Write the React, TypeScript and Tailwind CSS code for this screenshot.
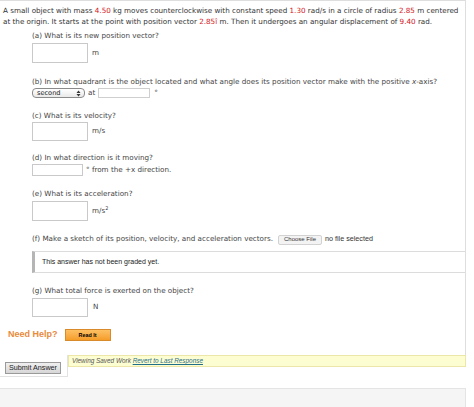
const red = 'text-[#d4161c]';

function Label({ children }: { children: React.ReactNode }) {
  return <p className="whitespace-nowrap text-[7.2px] leading-[11px] text-[#444]">{children}</p>;
}

function Box({ w = 'w-[56px]', h = 'h-[20px]' }: { w?: string; h?: string }) {
  return <div className={`${w} ${h} border border-[#c9c9c9] bg-white`} />;
}

export default function App() {
  return (
    <div className="h-[407px] w-[474px] overflow-hidden bg-white font-['DejaVu_Sans',sans-serif] text-[#333]">
      {/* question panel */}
      <div className="h-[355px] w-[466px] border-r border-t border-[#dedede] pl-[3px] pt-[4px]">
        <p className="text-[7.2px] leading-[11px] text-[#333]">
          <span className="block whitespace-nowrap">
            A small object with mass <span className={red}>4.50</span> kg moves counterclockwise with constant
            speed <span className={red}>1.30</span> rad/s in a circle of radius <span className={red}>2.85</span> m
            centered
          </span>
          <span className="block whitespace-nowrap">
            at the origin. It starts at the point with position vector <span className={red}>2.85î</span> m. Then
            it undergoes an angular displacement of <span className={red}>9.40</span> rad.
          </span>
        </p>

        <div className="pl-[29px]">
          <div className="mt-[3px]">
            <Label>(a) What is its new position vector?</Label>
          </div>
          <div className="mt-[2px] flex items-center gap-[4px] text-[7.2px] text-[#444]">
            <Box />
            <span>m</span>
          </div>

          <div className="mt-[13px]">
            <Label>
              (b) In what quadrant is the object located and what angle does its position vector make with the
              positive <i>x</i>-axis?
            </Label>
          </div>
          <div className="mt-[1px] flex h-[10px] items-center text-[7.2px] text-[#444]">
            <div className="flex h-[10px] w-[53px] items-center justify-between rounded-[4px] border border-[#8a8a8a] bg-gradient-to-b from-white to-[#e9e9e9] pl-[4px] pr-[3px] text-[6.6px] leading-none text-[#222]">
              <span>second</span>
              <svg width="5" height="7" viewBox="0 0 5 7">
                <path d="M0.5 3 L2.5 0.6 L4.5 3 Z M0.5 4 L2.5 6.4 L4.5 4 Z" fill="#333" />
              </svg>
            </div>
            <span className="ml-[3px]">at</span>
            <div className="ml-[3px] h-[10px] w-[52px] border border-[#cfcfcf] bg-white" />
            <span className="ml-[4px]">°</span>
          </div>

          <div className="mt-[12px]">
            <Label>(c) What is its velocity?</Label>
          </div>
          <div className="mt-[1px] flex items-center gap-[4px] text-[7.2px] text-[#444]">
            <Box h="h-[19px]" />
            <span>m/s</span>
          </div>

          <div className="mt-[11px]">
            <Label>(d) In what direction is it moving?</Label>
          </div>
          <div className="mt-[1px] flex items-center gap-[3px] text-[7.2px] text-[#444]">
            <Box w="w-[51px]" h="h-[12px]" />
            <span>° from the +x direction.</span>
          </div>

          <div className="mt-[12px]">
            <Label>(e) What is its acceleration?</Label>
          </div>
          <div className="mt-[2px] flex items-center gap-[4px] text-[7.2px] text-[#444]">
            <Box />
            <span>
              m/s<sup className="text-[5px]">2</sup>
            </span>
          </div>

          <div className="mt-[13px] flex h-[11px] items-center whitespace-nowrap text-[7.2px] text-[#444]">
            <span>(f) Make a sketch of its position, velocity, and acceleration vectors.</span>
            <span className="ml-[5px] flex h-[10px] items-center rounded-[2px] border border-[#d2d2d2] bg-[#f3f3f3] px-[5px] font-['Liberation_Sans',sans-serif] text-[6px] text-[#333]">
              Choose File
            </span>
            <span className="ml-[3px] font-['Liberation_Sans',sans-serif] text-[7.2px] text-[#333]">
              no file selected
            </span>
          </div>

          <div className="mt-[6px] flex h-[22px] items-center border-y border-l-[3px] border-y-[#dcdcdc] border-l-[#b5b5b5] pl-[7px] font-['Liberation_Sans',sans-serif] text-[7px] text-[#222]">
            This answer has not been graded yet.
          </div>

          <div className="mt-[12px]">
            <Label>(g) What total force is exerted on the object?</Label>
          </div>
          <div className="mt-[2px] flex items-center gap-[5px] text-[7.2px] text-[#444]">
            <Box h="h-[19px]" />
            <span>N</span>
          </div>
        </div>

        <div className="ml-[5px] mt-[12px] flex h-[12px] items-center font-['Liberation_Sans',sans-serif]">
          <span className="text-[9px] font-bold text-[#e98a3c]">Need Help?</span>
          <span className="ml-[7px] flex h-[12px] w-[46px] items-center justify-center border border-[#d98a2a] bg-gradient-to-b from-[#fdc062] to-[#f59d27] text-[5.4px] font-bold text-black">
            Read It
          </span>
        </div>
      </div>

      {/* submit row */}
      <div className="flex w-[466px] items-start">
        <div className="h-[22px] w-[68px] border-b border-r border-[#e2e2e2] pl-[5px] pt-[7px]">
          <div className="flex h-[12px] w-[56px] items-center justify-center border border-[#9a9a9a] bg-gradient-to-b from-[#efefef] to-[#d6d6d6] font-['Liberation_Sans',sans-serif] text-[7.2px] text-[#222]">
            Submit Answer
          </div>
        </div>
        <div className="flex h-[12px] flex-1 items-center border border-[#ece6a8] bg-[#fdfdd2] pl-[3px] font-['Liberation_Sans',sans-serif] text-[6.4px] italic text-[#555]">
          Viewing Saved Work&nbsp;
          <span className="text-[#1f6f8b] underline">Revert to Last Response</span>
        </div>
      </div>

      {/* next question */}
      <div className="mt-[11px] h-[30px] w-[466px] border-r border-t border-[#e4e4e4] bg-[#f5f5f5]" />
    </div>
  );
}
